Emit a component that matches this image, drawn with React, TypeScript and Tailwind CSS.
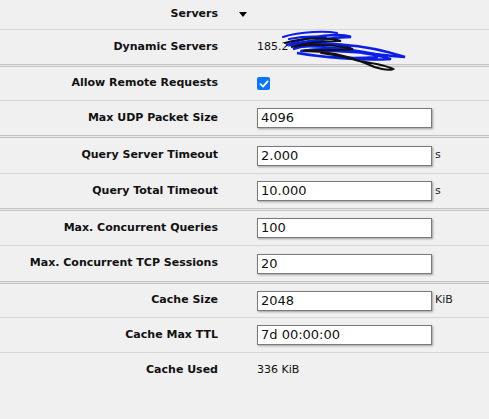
import React from "react";

type Row = {
  label: string;
  kind: "text" | "input" | "check" | "redacted";
  value?: string;
  unit?: string;
  h: string;
  sepAfter?: "line" | "double";
};

const rows: Row[] = [
  { label: "Dynamic Servers", kind: "redacted", value: "185.2", h: "h-[34px]", sepAfter: "double" },
  { label: "Allow Remote Requests", kind: "check", h: "h-[33px]", sepAfter: "line" },
  { label: "Max UDP Packet Size", kind: "input", value: "4096", h: "h-[34px]", sepAfter: "double" },
  { label: "Query Server Timeout", kind: "input", value: "2.000", unit: "s", h: "h-[35px]", sepAfter: "line" },
  { label: "Query Total Timeout", kind: "input", value: "10.000", unit: "s", h: "h-[34px]", sepAfter: "double" },
  { label: "Max. Concurrent Queries", kind: "input", value: "100", h: "h-[34px]", sepAfter: "line" },
  { label: "Max. Concurrent TCP Sessions", kind: "input", value: "20", h: "h-[35px]", sepAfter: "double" },
  { label: "Cache Size", kind: "input", value: "2048", unit: "KiB", h: "h-[33px]", sepAfter: "line" },
  { label: "Cache Max TTL", kind: "input", value: "7d 00:00:00", h: "h-[34px]", sepAfter: "line" },
  { label: "Cache Used", kind: "text", value: "336 KiB", h: "h-[35px]" },
];

function Separator({ kind }: { kind: "line" | "double" }) {
  if (kind === "double") {
    return <div className="h-[3px] border-y border-[#c2c2c2] bg-[#e9e9e9]" />;
  }
  return <div className="h-px bg-[#d6d6d6]" />;
}

function Scribble() {
  return (
    <svg
      className="pointer-events-none absolute left-[24px] top-[-12px]"
      width="130"
      height="52"
      viewBox="0 0 130 52"
      fill="none"
    >
      <path
        d="M6 18 C30 8 60 6 70 10 C50 10 30 14 12 22 C40 14 80 16 124 30 C100 28 60 22 20 24 C50 20 90 26 110 32 C80 34 40 30 16 26 C40 30 70 32 96 30"
        stroke="#0a1ee8"
        strokeWidth="2.4"
        strokeLinecap="round"
      />
      <path
        d="M2 10 C20 4 46 4 56 6 M8 12 C30 8 50 10 44 12 C30 14 12 16 10 18 C30 14 60 16 70 20 C50 22 30 22 20 24 M14 20 C40 18 70 22 100 28"
        stroke="#0a1ee8"
        strokeWidth="2.2"
        strokeLinecap="round"
      />
      <path
        d="M4 16 C24 10 48 10 60 14 C44 14 24 16 10 20 C30 16 56 18 72 22 C60 24 40 22 22 24 C50 24 70 30 84 36 C96 42 108 44 112 42 C104 38 90 36 78 34 C66 30 54 28 40 26"
        stroke="#111"
        strokeWidth="2"
        strokeLinecap="round"
      />
    </svg>
  );
}

function Value({ row }: { row: Row }) {
  if (row.kind === "input") {
    return (
      <div className="flex items-center">
        <div className="flex h-[20px] w-[175px] items-center border border-[#7a7a7a] bg-white pl-[3px] text-[13px] text-[#111] shadow-[1px_1px_2px_rgba(0,0,0,0.35)]">
          {row.value}
        </div>
        {row.unit && <span className="ml-[3px] text-[11px] text-[#222]">{row.unit}</span>}
      </div>
    );
  }
  if (row.kind === "check") {
    return (
      <div className="flex h-[13px] w-[13px] items-center justify-center rounded-[2px] bg-[#0a75ff]">
        <svg width="10" height="10" viewBox="0 0 10 10" fill="none">
          <path d="M1.5 5.2 L4 7.6 L8.6 2.4" stroke="white" strokeWidth="1.8" strokeLinecap="round" strokeLinejoin="round" />
        </svg>
      </div>
    );
  }
  if (row.kind === "redacted") {
    return (
      <div className="relative text-[11px] text-[#111]">
        {row.value}
        <Scribble />
      </div>
    );
  }
  return <div className="text-[11px] text-[#111]">{row.value}</div>;
}

export default function App() {
  return (
    <div className="h-[419px] w-[489px] overflow-hidden bg-[#f0f0f0] font-['DejaVu_Sans',Verdana,sans-serif]">
      <div className="flex h-[29px] items-center">
        <div className="w-[218px] text-right text-[11px] font-bold text-[#111]">Servers</div>
        <div className="ml-[21px] h-0 w-0 border-x-[4.5px] border-t-[5px] border-x-transparent border-t-black" />
      </div>
      <Separator kind="line" />
      {rows.map((row) => (
        <React.Fragment key={row.label}>
          <div className={`flex ${row.h} items-center`}>
            <div className="w-[218px] text-right text-[11px] font-bold text-[#111]">{row.label}</div>
            <div className="ml-[39px]">
              <Value row={row} />
            </div>
          </div>
          {row.sepAfter && <Separator kind={row.sepAfter} />}
        </React.Fragment>
      ))}
    </div>
  );
}
